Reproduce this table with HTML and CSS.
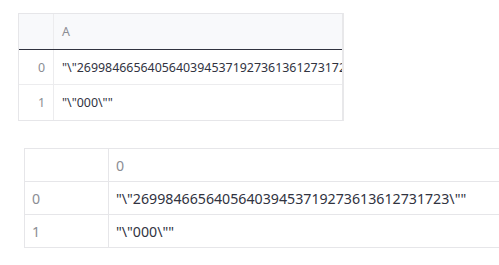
FILE: index.html
```html
<!DOCTYPE html>
<html>
<head>
<meta charset="utf-8">
<link rel="stylesheet" href="styles.css">
</head>
<body>
<div class="grid">
  <div class="grow ghead">
    <div class="gidx"></div>
    <div class="gcell gh">A</div>
  </div>
  <div class="grow">
    <div class="gidx">0</div>
    <div class="gcell">"\"269984665640564039453719273613612731723\""</div>
  </div>
  <div class="grow glast">
    <div class="gidx">1</div>
    <div class="gcell">"\"000\""</div>
  </div>
</div>

<table class="tbl">
  <colgroup>
    <col class="cidx">
    <col class="cval">
  </colgroup>
  <thead>
    <tr><th class="tidx"></th><th class="thead">0</th></tr>
  </thead>
  <tbody>
    <tr><td class="tidx">0</td><td class="tval">"\"269984665640564039453719273613612731723\""</td></tr>
    <tr><td class="tidx">1</td><td class="tval">"\"000\""</td></tr>
  </tbody>
</table>
</body>
</html>
```
FILE: styles.css
```css
html, body {
  margin: 0;
  padding: 0;
  background: #ffffff;
  overflow: hidden;
}
body {
  font-family: "Noto Sans", "Open Sans", sans-serif;
  color: #31333f;
}
.grid {
  margin: 13px 0 0 18px;
  width: 323px;
  border: 1px solid #e6e6e9;
  border-right: 2px solid #e8e8ea;
  font-size: 12.4px;
  overflow: hidden;
}
.grow {
  display: flex;
  height: 34px;
  border-bottom: 1px solid #ececee;
}
.grow.ghead {
  height: 35px;
  background: #f8f9fb;
  border-bottom: 1px solid #31333f;
}
.grow.glast {
  height: 35px;
  border-bottom: none;
}
.gidx {
  flex: 0 0 35px;
  border-right: 1px solid #ececee;
  display: flex;
  align-items: center;
  justify-content: flex-end;
  padding-right: 8px;
  box-sizing: border-box;
  color: #8b8d94;
}
.gcell {
  flex: 1 1 auto;
  min-width: 0;
  display: flex;
  align-items: center;
  padding-left: 8px;
  white-space: nowrap;
  overflow: hidden;
}
.gcell.gh {
  color: #8b8d94;
}
.tbl {
  margin: 27px 0 0 24px;
  border-collapse: collapse;
  table-layout: fixed;
  width: 477px;
  font-size: 14.2px;
}
.cidx {
  width: 84px;
}
.cval {
  width: 393px;
}
.tbl th, .tbl td {
  border: 1px solid #e6e6e9;
  height: 33px;
  padding: 0 7px;
  text-align: left;
  font-weight: 400;
  white-space: nowrap;
  box-sizing: border-box;
}
.tbl .tidx {
  color: #8b8d94;
}
.tbl .thead {
  color: #8b8d94;
}
.tbl .tval {
  color: #31333f;
}
```
